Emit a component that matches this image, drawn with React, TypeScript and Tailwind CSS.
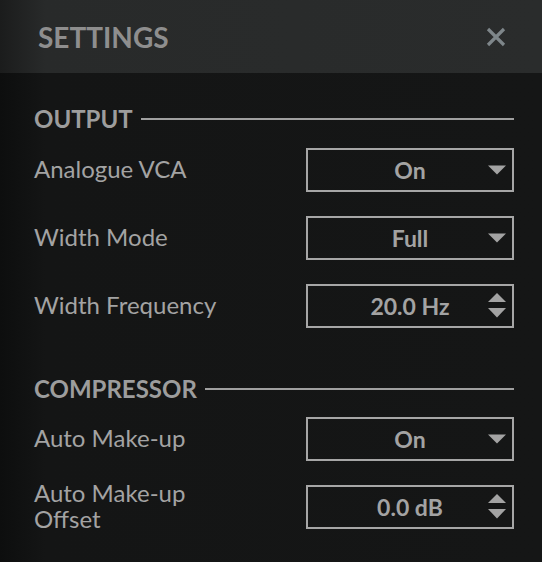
import React from "react";

const font = { fontFamily: "Lato, 'Open Sans', sans-serif" };

function Caret() {
  return (
    <svg width="18" height="10" viewBox="0 0 18 10" className="absolute right-[6px] top-1/2 -translate-y-1/2">
      <polygon points="0,0.5 18,0.5 9,9.5" fill="#a3a3a3" />
    </svg>
  );
}

function Spinner() {
  return (
    <svg width="18" height="26" viewBox="0 0 18 26" className="absolute right-[6px] top-1/2 -translate-y-1/2">
      <polygon points="9,0 18,9 0,9" fill="#a3a3a3" />
      <polygon points="0,15 18,15 9,24.5" fill="#a3a3a3" />
    </svg>
  );
}

function Field({ value, kind }: { value: string; kind: "select" | "spin" }) {
  return (
    <div className="relative flex h-[44px] w-[208px] shrink-0 items-center justify-center border-2 border-[#a6a6a6]">
      <span className="text-[23px] font-bold leading-[26px] text-[#a3a3a3]">{value}</span>
      {kind === "select" ? <Caret /> : <Spinner />}
    </div>
  );
}

function Row({ label, value, kind }: { label: React.ReactNode; value: string; kind: "select" | "spin" }) {
  return (
    <div className="flex h-[44px] items-center justify-between">
      <div className="pb-[2px] text-[24px] leading-[26px] text-[#a3a3a3]">{label}</div>
      <Field value={value} kind={kind} />
    </div>
  );
}

function Heading({ text }: { text: string }) {
  return (
    <div className="flex h-[26px] items-center gap-2">
      <span className="text-[24px] font-bold leading-[26px] text-[#9d9d9d]">{text}</span>
      <div className="h-[2px] flex-1 bg-[#a0a0a0]" />
    </div>
  );
}

export default function App() {
  return (
    <div
      style={font}
      className="flex h-[562px] w-[542px] flex-col overflow-hidden bg-[linear-gradient(to_right,#0d0e0e_0px,#141515_45px,#151616_100%)]"
    >
      <div className="flex h-[73px] shrink-0 items-center justify-between bg-[linear-gradient(to_right,#1b1c1c_0px,#282a2a_45px,#2a2c2c_100%)] pl-[38px] pr-[36px]">
        <span className="text-[28px] font-bold leading-[32px] text-[#8e8e8e]">SETTINGS</span>
        <svg width="20" height="20" viewBox="0 0 20 20">
          <path d="M2 2 L18 18 M18 2 L2 18" stroke="#7e868a" strokeWidth="3.2" strokeLinecap="butt" />
        </svg>
      </div>
      <div className="flex flex-col pl-[34px] pr-[28px] pt-[33px]">
        <Heading text="OUTPUT" />
        <div className="mt-[16px] flex flex-col gap-[24px]">
          <Row label="Analogue VCA" value="On" kind="select" />
          <Row label="Width Mode" value="Full" kind="select" />
          <Row label="Width Frequency" value="20.0 Hz" kind="spin" />
        </div>
        <div className="mt-[48px]">
          <Heading text="COMPRESSOR" />
        </div>
        <div className="mt-[15px] flex flex-col gap-[24px]">
          <Row label="Auto Make-up" value="On" kind="select" />
          <Row
            label={
              <>
                Auto Make-up
                <br />
                Offset
              </>
            }
            value="0.0 dB"
            kind="spin"
          />
        </div>
      </div>
    </div>
  );
}
